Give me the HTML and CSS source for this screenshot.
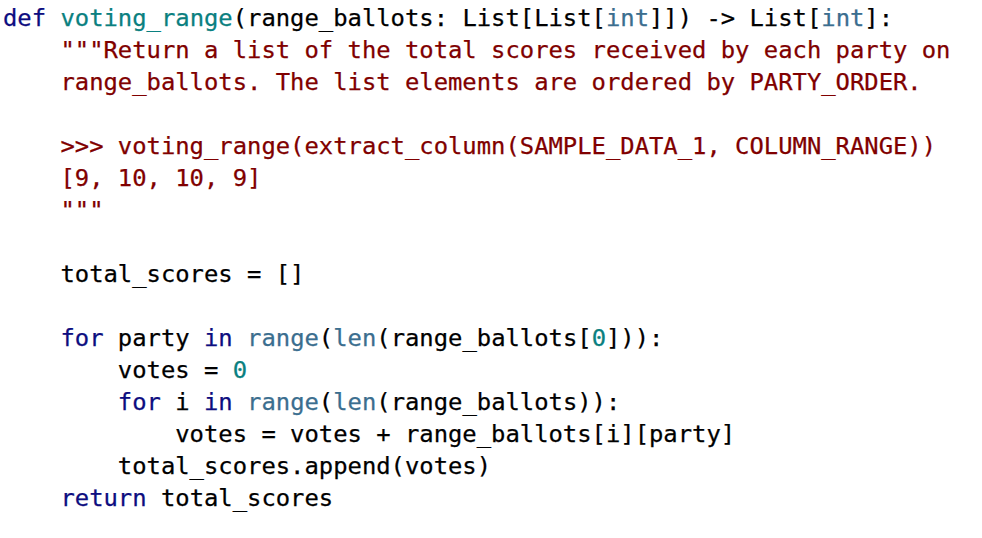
FILE: index.html
```html
<!DOCTYPE html>
<html>
<head>
<meta charset="utf-8">
<link rel="stylesheet" href="styles.css">
</head>
<body>
<pre class="code"><span class="kw">def</span> <span class="fn">voting_range</span>(range_ballots: List[List[<span class="bi">int</span>]]) -&gt; List[<span class="bi">int</span>]:
    <span class="str">"""Return a list of the total scores received by each party on
    range_ballots. The list elements are ordered by PARTY_ORDER.

    &gt;&gt;&gt; voting_range(extract_column(SAMPLE_DATA_1, COLUMN_RANGE))
    [9, 10, 10, 9]
    """</span>

    total_scores = []

    <span class="kw">for</span> party <span class="kw">in</span> <span class="bi">range</span>(<span class="bi">len</span>(range_ballots[<span class="num">0</span>])):
        votes = <span class="num">0</span>
        <span class="kw">for</span> i <span class="kw">in</span> <span class="bi">range</span>(<span class="bi">len</span>(range_ballots)):
            votes = votes + range_ballots[i][party]
        total_scores.append(votes)
    <span class="kw">return</span> total_scores
</pre>
</body>
</html>
```
FILE: styles.css
```css
html, body {
  margin: 0;
  padding: 0;
  background: #ffffff;
}
.code {
  margin: 0;
  padding: 2px 0 0 3px;
  font-family: "DejaVu Sans Mono", monospace;
  font-size: 23.85px;
  line-height: 32px;
  color: #000000;
  -webkit-text-stroke: 0.25px currentColor;
}
.kw { color: #0d0d80; }
.fn { color: #0a8080; }
.bi { color: #3b6e8f; }
.num { color: #0a8080; }
.str { color: #800000; }
```
